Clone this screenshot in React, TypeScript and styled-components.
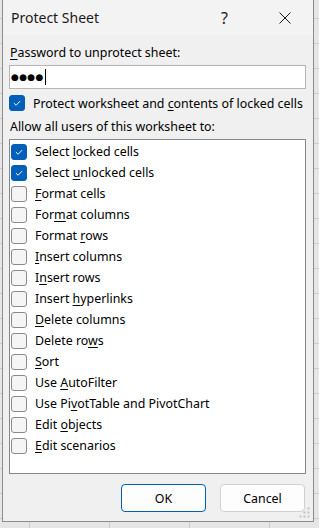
import React from 'react';
import styled, { createGlobalStyle } from 'styled-components';

const GlobalStyle = createGlobalStyle`
  html, body {
    margin: 0;
    padding: 0;
  }
  body {
    background-color: #e6e6e6;
    background-image:
      linear-gradient(to right, #cdcdcd 1px, transparent 1px),
      linear-gradient(to bottom, #cdcdcd 1px, transparent 1px);
    background-size: 80px 100%, 100% 25px;
    background-position: 29px 0, 0 18px;
    font-family: 'Noto Sans', 'Segoe UI', sans-serif;
    color: #000;
  }
`;

const Page = styled.div`
  padding: 0 5px 6px 2px;
`;

const Dialog = styled.div`
  position: relative;
  box-sizing: border-box;
  width: 312px;
  height: 522px;
  background: #f0f0f0;
  border: 1px solid #8c8c8c;
  border-top: none;
  display: flex;
  flex-direction: column;
`;

const TitleBar = styled.div`
  height: 35px;
  background: #f3f3f3;
  display: flex;
  align-items: center;
  justify-content: space-between;
  padding-left: 8px;
`;

const Title = styled.div`
  font-size: 14px;
  color: #1a1a1a;
`;

const TitleButtons = styled.div`
  display: flex;
  height: 100%;
`;

const TitleButton = styled.div`
  width: 57px;
  display: flex;
  align-items: center;
  justify-content: center;
  font-size: 16px;
  color: #1a1a1a;
  &:first-child {
    padding-right: 3px;
  }
`;

const Body = styled.div`
  padding: 10px 7px 0 6px;
  display: flex;
  flex-direction: column;
  font-size: 12.4px;
`;

const Label = styled.div`
  line-height: 16px;
  padding-left: 1px;
`;

const Acc = styled.span`
  text-decoration: underline;
  text-underline-offset: 2px;
`;

const PasswordField = styled.div`
  box-sizing: border-box;
  margin-top: 4px;
  height: 24px;
  background: #fff;
  border: 1px solid #b5b5b5;
  display: flex;
  align-items: center;
  padding-left: 1px;
`;

const Dots = styled.span`
  font-family: 'DejaVu Sans', sans-serif;
  font-size: 9px;
  letter-spacing: 0.3px;
  color: #000;
`;

const Caret = styled.span`
  width: 1px;
  height: 16px;
  background: #000;
  margin-left: 1px;
`;

const CheckRow = styled.div`
  margin-top: 6px;
  height: 16px;
  display: flex;
  align-items: center;
  gap: 8px;
`;

const Box = styled.span<{ $checked?: boolean }>`
  box-sizing: border-box;
  flex: none;
  width: 16px;
  height: 16px;
  border-radius: 3px;
  border: 1px solid ${({ $checked }) => ($checked ? '#005fb8' : '#8a8a8a')};
  background: ${({ $checked }) => ($checked ? '#005fb8' : '#f5f5f5')};
  display: flex;
  align-items: center;
  justify-content: center;
  svg {
    display: block;
  }
`;

const SectionLabel = styled.div`
  margin-top: 8px;
  line-height: 16px;
  padding-left: 1px;
`;

const ListBox = styled.div`
  box-sizing: border-box;
  margin-top: 4px;
  height: 335px;
  background: #fff;
  border: 1px solid #828790;
  padding: 1px 0 0 1px;
`;

const ListItem = styled.div`
  height: 21px;
  display: flex;
  align-items: center;
  gap: 8px;
`;

const Buttons = styled.div`
  margin-top: 10px;
  display: flex;
  justify-content: flex-end;
  gap: 14px;
  padding-right: 1px;
`;

const Button = styled.div<{ $primary?: boolean }>`
  box-sizing: border-box;
  width: 85px;
  height: 28px;
  border-radius: 4px;
  background: #fdfdfd;
  border: 1px solid ${({ $primary }) => ($primary ? '#005fb8' : '#d0d0d0')};
  display: flex;
  align-items: center;
  justify-content: center;
  font-size: 12.4px;
`;

const Grip = styled.svg`
  position: absolute;
  right: 2px;
  bottom: 2px;
`;

type Perm = { label: React.ReactNode; checked?: boolean };

const u = (s: string) => <Acc>{s}</Acc>;

const perms: Perm[] = [
  { label: <>Select {u('l')}ocked cells</>, checked: true },
  { label: <>Select {u('u')}nlocked cells</>, checked: true },
  { label: <>{u('F')}ormat cells</> },
  { label: <>For{u('m')}at columns</> },
  { label: <>Format {u('r')}ows</> },
  { label: <>{u('I')}nsert columns</> },
  { label: <>I{u('n')}sert rows</> },
  { label: <>Insert {u('h')}yperlinks</> },
  { label: <>{u('D')}elete columns</> },
  { label: <>Delete ro{u('w')}s</> },
  { label: <>{u('S')}ort</> },
  { label: <>Use {u('A')}utoFilter</> },
  { label: <>Use Pi{u('v')}otTable and PivotChart</> },
  { label: <>Edit {u('o')}bjects</> },
  { label: <>{u('E')}dit scenarios</> },
];

const Check = ({ checked }: { checked?: boolean }) => (
  <Box $checked={checked}>
    {checked && (
      <svg width="16" height="16" viewBox="0 0 16 16">
        <path d="M4.5 8.2 L7 10.6 L11.6 5.8" fill="none" stroke="#fff" strokeWidth="1.1" />
      </svg>
    )}
  </Box>
);

export default function App() {
  return (
    <>
      <GlobalStyle />
      <Page>
        <Dialog>
          <TitleBar>
            <Title>Protect Sheet</Title>
            <TitleButtons>
              <TitleButton>?</TitleButton>
              <TitleButton>
                <svg width="12" height="12" viewBox="0 0 12 12">
                  <path d="M0.5 0.5 L11.5 11.5 M11.5 0.5 L0.5 11.5" stroke="#1a1a1a" strokeWidth="1" />
                </svg>
              </TitleButton>
            </TitleButtons>
          </TitleBar>
          <Body>
            <Label>{u('P')}assword to unprotect sheet:</Label>
            <PasswordField>
              <Dots>●●●●</Dots>
              <Caret />
            </PasswordField>
            <CheckRow>
              <Check checked />
              <span>Protect worksheet and {u('c')}ontents of locked cells</span>
            </CheckRow>
            <SectionLabel>Allow all users of this worksheet to:</SectionLabel>
            <ListBox>
              {perms.map((p, i) => (
                <ListItem key={i}>
                  <Check checked={p.checked} />
                  <span>{p.label}</span>
                </ListItem>
              ))}
            </ListBox>
            <Buttons>
              <Button $primary>OK</Button>
              <Button>Cancel</Button>
            </Buttons>
          </Body>
          <Grip width="12" height="12" viewBox="0 0 12 12">
            <rect x="8.5" y="0.5" width="2" height="2" fill="#c4c4c4" />
            <rect x="4.5" y="4.5" width="2" height="2" fill="#c4c4c4" />
            <rect x="8.5" y="4.5" width="2" height="2" fill="#c4c4c4" />
            <rect x="0.5" y="8.5" width="2" height="2" fill="#c4c4c4" />
            <rect x="4.5" y="8.5" width="2" height="2" fill="#c4c4c4" />
            <rect x="8.5" y="8.5" width="2" height="2" fill="#c4c4c4" />
          </Grip>
        </Dialog>
      </Page>
    </>
  );
}
